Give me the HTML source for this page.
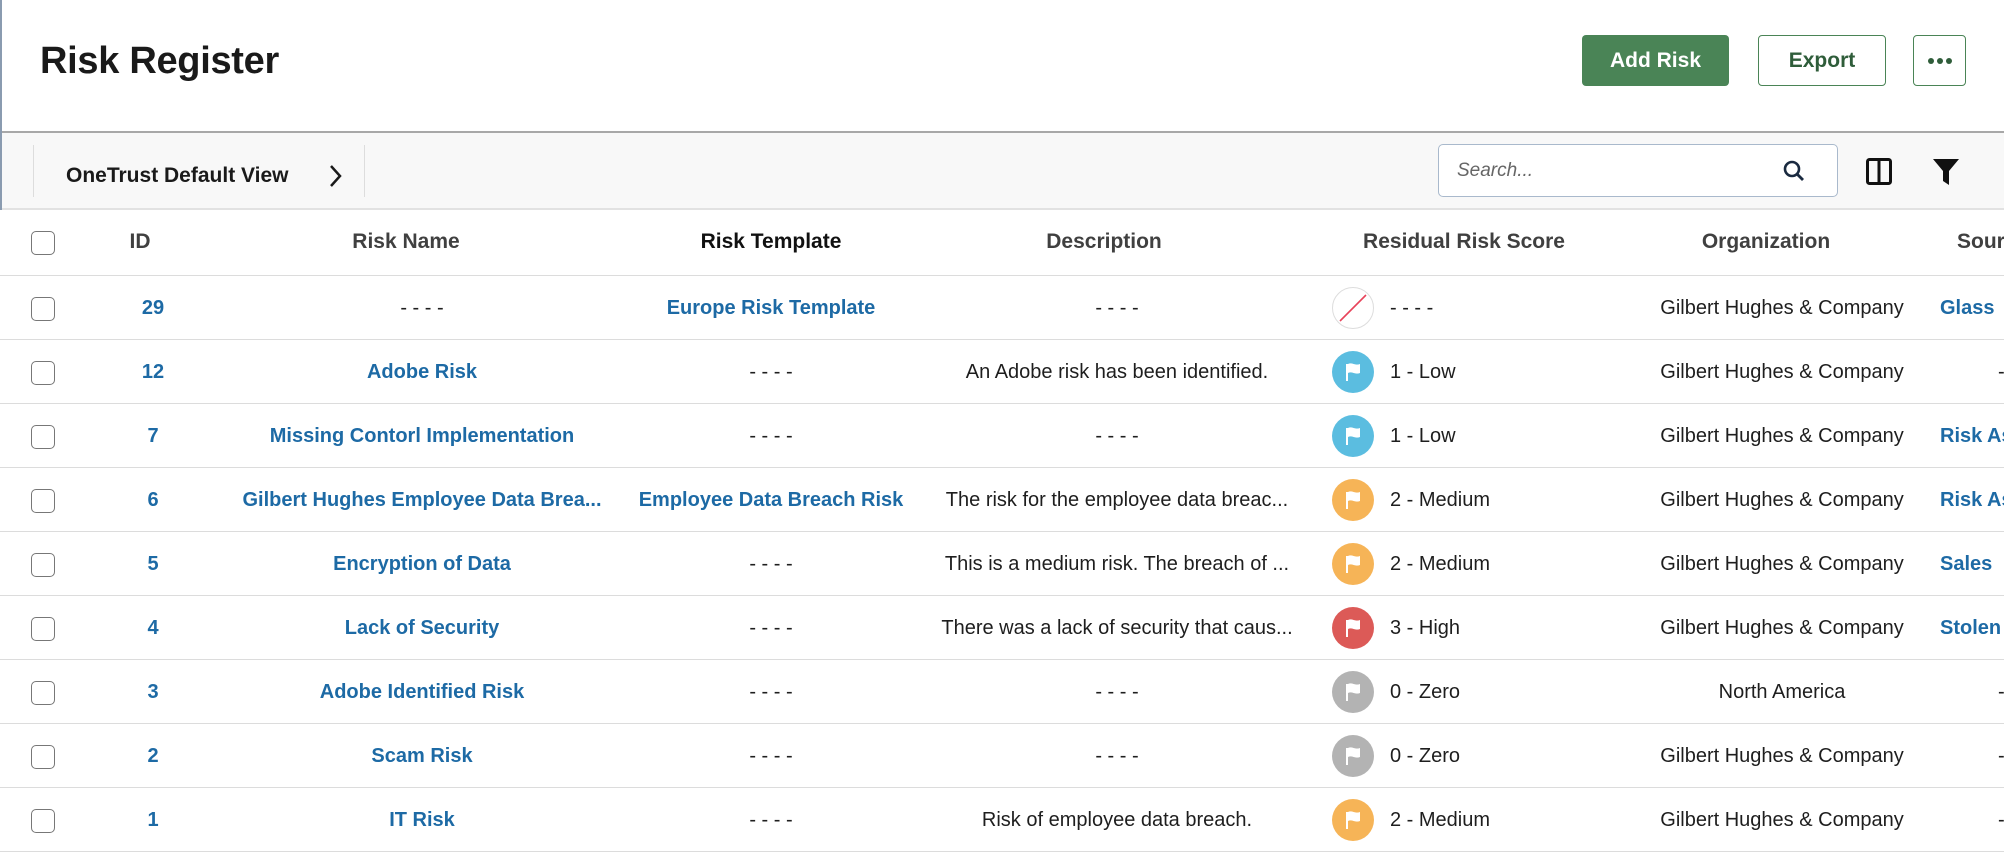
<!DOCTYPE html>
<html><head><meta charset="utf-8"><style>
*{box-sizing:border-box;margin:0;padding:0}
body{width:2004px;height:852px;overflow:hidden;background:#fff;font-family:"Liberation Sans",sans-serif;color:#1e1e1e;position:relative}
.abs{position:absolute}
.lb{position:absolute;left:0;top:0;width:1.5px;height:210px;background:#8a9bb0;z-index:5}
h1{position:absolute;left:40px;top:40px;font-size:38px;font-weight:600;color:#1a1a1a;letter-spacing:-0.3px}
.btn{position:absolute;top:35px;height:51px;border-radius:4px;font-size:21px;font-weight:600;display:flex;align-items:center;justify-content:center}
.tb{position:absolute;left:0;top:131px;width:2004px;height:79px;background:#f8f8f8;border-top:2px solid #a8a8a8;border-bottom:2px solid #e2e2e2}
.row{position:absolute;left:0;width:2004px;height:64px;border-bottom:1px solid #dcdcdc}
.c{position:absolute;top:0;height:64px;display:flex;align-items:center;white-space:nowrap;font-size:20px}
.ctr{transform:translateX(-50%);justify-content:center}
.cb{position:absolute;left:31px;top:21px;width:24px;height:24px;border:1.5px solid #777;border-radius:5px;background:#fff}
.lk{color:#1d6aa5;font-weight:600}
.hd{color:#404040;font-weight:600;font-size:21px}
.ic{position:absolute;left:1332px;top:11px;width:42px;height:42px;border-radius:50%}
</style></head><body>
<div class="lb"></div>
<h1>Risk Register</h1>
<div class="btn" style="left:1582px;width:147px;background:#4a8456;color:#fff">Add Risk</div>
<div class="btn" style="left:1758px;width:128px;border:1.5px solid #4a8456;color:#2f5d3a;background:#fff">Export</div>
<div class="btn" style="left:1913px;width:53px;border:1.5px solid #4a8456;background:#fff"><svg width="26" height="8" viewBox="0 0 26 8"><circle cx="4" cy="4" r="3" fill="#2f5d3a"/><circle cx="13" cy="4" r="3" fill="#2f5d3a"/><circle cx="22" cy="4" r="3" fill="#2f5d3a"/></svg></div>
<div class="tb">
 <div class="abs" style="left:33px;top:12px;width:1px;height:52px;background:#ddd"></div>
 <div class="abs" style="left:66px;top:31px;font-size:21px;font-weight:600;color:#1a1a1a">OneTrust Default View</div>
 <svg class="abs" style="left:326px;top:30px" width="18" height="26" viewBox="0 0 18 26"><path d="M5 3l9 10-9 10" fill="none" stroke="#1a1a1a" stroke-width="2.5"/></svg>
 <div class="abs" style="left:364px;top:12px;width:1px;height:52px;background:#ddd"></div>
 <div class="abs" style="left:1438px;top:11px;width:400px;height:53px;border:1.5px solid #a9b9cc;border-radius:5px;background:#fff">
  <span class="abs" style="left:18px;top:15px;font-size:19px;font-style:italic;color:#666">Search...</span>
  <svg class="abs" style="left:343px;top:14px" width="24" height="24" viewBox="0 0 24 24"><circle cx="10" cy="10" r="7" fill="none" stroke="#1a2a40" stroke-width="2.6"/><path d="M15 15l6 6" stroke="#1a2a40" stroke-width="2.8"/></svg>
 </div>
 <svg class="abs" style="left:1866px;top:25px" width="26" height="27" viewBox="0 0 26 27"><rect x="1.5" y="1.5" width="23" height="24" rx="2" fill="none" stroke="#111" stroke-width="3"/><path d="M13 2v23" stroke="#111" stroke-width="3"/></svg>
 <svg class="abs" style="left:1932px;top:25px" width="28" height="28" viewBox="0 0 28 28"><path d="M1 1h26l-10 12v14l-6-4V13z" fill="#111"/></svg>
</div>
<div class="row" style="top:210px;height:66px">
 <div class="cb"></div>
 <div class="c ctr hd" style="left:140px">ID</div>
 <div class="c ctr hd" style="left:406px">Risk Name</div>
 <div class="c ctr hd" style="left:771px;color:#111">Risk Template</div>
 <div class="c ctr hd" style="left:1104px">Description</div>
 <div class="c ctr hd" style="left:1464px">Residual Risk Score</div>
 <div class="c ctr hd" style="left:1766px">Organization</div>
 <div class="c hd" style="left:1957px">Source</div>
</div>
<div id="rows"></div>
<script>
const F='<svg width="42" height="42" viewBox="0 0 42 42"><path d="M15 13v17" stroke="#fff" stroke-width="2"/><path d="M16 13c4-2 7 2 12 0v9c-5 2-8-2-12 0z" fill="#fff"/></svg>';
const col={b:'#5bbde0',o:'#f6b457',r:'#dc5a57',g:'#b3b3b3'};
const d=[
['29','- - - -',0,'Europe Risk Template',1,'- - - -','n','- - - -','Gilbert Hughes &amp; Company','Glass',1],
['12','Adobe Risk',1,'- - - -',0,'An Adobe risk has been identified.','b','1 - Low','Gilbert Hughes &amp; Company','-',0],
['7','Missing Contorl Implementation',1,'- - - -',0,'- - - -','b','1 - Low','Gilbert Hughes &amp; Company','Risk As',1],
['6','Gilbert Hughes Employee Data Brea...',1,'Employee Data Breach Risk',1,'The risk for the employee data breac...','o','2 - Medium','Gilbert Hughes &amp; Company','Risk As',1],
['5','Encryption of Data',1,'- - - -',0,'This is a medium risk. The breach of ...','o','2 - Medium','Gilbert Hughes &amp; Company','Sales',1],
['4','Lack of Security',1,'- - - -',0,'There was a lack of security that caus...','r','3 - High','Gilbert Hughes &amp; Company','Stolen',1],
['3','Adobe Identified Risk',1,'- - - -',0,'- - - -','g','0 - Zero','North America','-',0],
['2','Scam Risk',1,'- - - -',0,'- - - -','g','0 - Zero','Gilbert Hughes &amp; Company','-',0],
['1','IT Risk',1,'- - - -',0,'Risk of employee data breach.','o','2 - Medium','Gilbert Hughes &amp; Company','-',0]];
let h='';
d.forEach((r,i)=>{
 const t=276+i*64;
 const ic=r[6]=='n'?'<div class="ic" style="border:1px solid #ddd;background:#fff"><svg width="40" height="40" viewBox="0 0 40 40"><path d="M7 33L33 7" stroke="#e8435a" stroke-width="1.6"/></svg></div>':'<div class="ic" style="background:'+col[r[6]]+'">'+F+'</div>';
 h+='<div class="row" style="top:'+t+'px"><div class="cb"></div>'+
 '<div class="c ctr lk" style="left:153px">'+r[0]+'</div>'+
 '<div class="c ctr '+(r[2]?'lk':'')+'" style="left:422px">'+r[1]+'</div>'+
 '<div class="c ctr '+(r[4]?'lk':'')+'" style="left:771px">'+r[3]+'</div>'+
 '<div class="c ctr" style="left:1117px">'+r[5]+'</div>'+ic+
 '<div class="c" style="left:1390px">'+r[7]+'</div>'+
 '<div class="c ctr" style="left:1782px">'+r[8]+'</div>'+
 '<div class="c '+(r[10]?'lk':'')+'" style="left:'+(r[10]?1940:1998)+'px">'+r[9]+'</div></div>';
});
document.getElementById('rows').innerHTML=h;
</script>
</body></html>
